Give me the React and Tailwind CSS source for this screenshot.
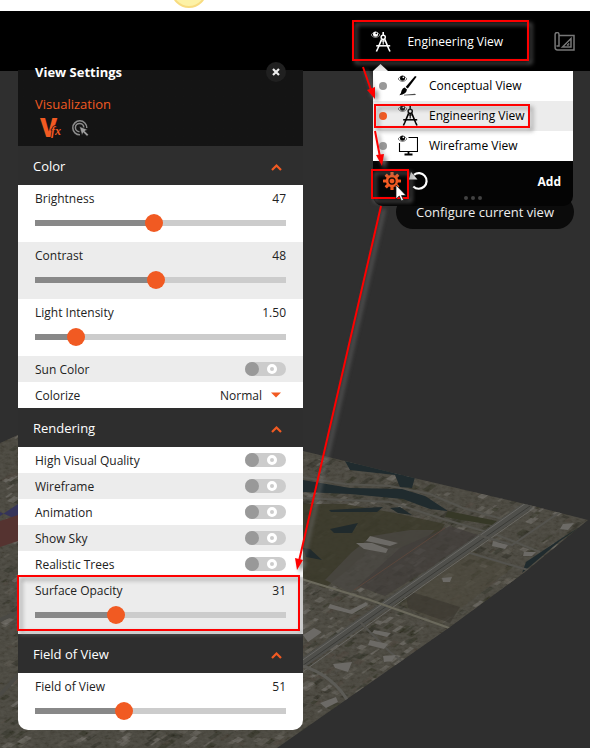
import React, { useState } from 'react';

const Eye = ({ pupil = 'white' }) => (
  <g>
    <path d="M0 4 Q4.5 -2.4 9 4 Q4.5 9 0 4 Z" fill="none" stroke="currentColor" strokeWidth="1" opacity="0.5" />
    <circle cx="4.5" cy="3.2" r="2.5" fill="currentColor" />
    <circle cx="5.3" cy="2.4" r="0.8" fill={pupil} />
  </g>
);

const CompassIcon = ({ pupil }) => (
  <svg width="20" height="22" viewBox="0 0 20 22" fill="none" stroke="currentColor" aria-hidden="true">
    <g stroke="none"><Eye pupil={pupil} /></g>
    <path d="M12.2 1v3" strokeWidth="1.6" />
    <circle cx="12.2" cy="6.3" r="2.1" strokeWidth="1.4" />
    <path d="M10.6 8.4 6.8 17.5 5.4 20.5M13.8 8.4 17.6 17.5 19 20.5" strokeWidth="1.6" />
    <path d="M5.2 14.8h14" strokeWidth="1.5" />
    <path d="M12.2 9v4.5M10.5 10h3.4" strokeWidth="1.1" />
  </svg>
);

const BrushIcon = () => (
  <svg width="20" height="22" viewBox="0 0 20 22" fill="currentColor" aria-hidden="true">
    <Eye />
    <path d="M17 1 18.6 1.8 9.8 13.6 7.6 12Z" />
    <path d="M6.6 12.6 9 14.4Q8.4 19 1.4 20.2 3.6 17.5 3.6 15.5 4.6 13 6.6 12.6Z" />
    <path d="M6 19.8 17 18.8 18 20 6 20.6Z" opacity="0.7" />
  </svg>
);

const MonitorIcon = () => (
  <svg width="20" height="22" viewBox="0 0 20 22" fill="none" stroke="currentColor" aria-hidden="true">
    <g stroke="none"><Eye /></g>
    <path d="M10.5 2.5h9v14h-18V8" strokeWidth="1.1" />
    <path d="M10.5 16.5v2.5M6.5 19.5h8" strokeWidth="1.8" />
  </svg>
);

const BlueprintIcon = () => (
  <svg width="21" height="21" viewBox="0 0 21 21" fill="none" stroke="currentColor" strokeWidth="1.5" aria-hidden="true">
    <path d="M5 3.5h15v14.5H3.5a2.4 2.4 0 0 1-2.4-2.4V2.5A1.9 1.9 0 0 1 5 2.5V14H2.5" />
    <path d="M17 6.5v8.5H8.5Z" />
    <path d="M14.8 11.3v1.9h-1.9Z" strokeWidth="1" />
  </svg>
);

const GearIcon = () => (
  <svg width="18" height="18" viewBox="-9 -9 18 18" aria-hidden="true">
    <g fill="#f15a22">
      {[0, 45, 90, 135].map((a) => (
        <rect key={a} x="-1.6" y="-9" width="3.2" height="18" rx="0.5" transform={`rotate(${a})`} />
      ))}
      <circle r="6.2" />
    </g>
    <circle r="3" fill="#f15a22" stroke="#1b0d07" strokeWidth="1.3" />
  </svg>
);

const ResetIcon = () => (
  <svg width="19" height="20" viewBox="0 0 19 20" fill="none" aria-hidden="true">
    <path d="M5 3.8A7.8 7.8 0 1 1 4.3 15.5" stroke="white" strokeWidth="2.2" />
    <path d="M0 8.5 2 1 8.5 8.5Z" fill="#ddd" />
  </svg>
);

const VfxIcon = () => (
  <svg width="24" height="23" viewBox="0 0 24 23" fill="#f15a22" className="overflow-visible" aria-hidden="true">
    <text x="0" y="20" fontSize="26" fontWeight="900" fontFamily="Roboto, sans-serif" paintOrder="stroke">
      V<tspan x="11" y="18" fontSize="12" fontWeight="700" fontStyle="italic" fontFamily="'Liberation Serif', serif" stroke="#141414" strokeWidth="1.5">fx</tspan>
    </text>
  </svg>
);

const TargetIcon = () => (
  <svg width="17" height="17" viewBox="0 0 17 17" fill="none" stroke="#8b8b8b" aria-hidden="true">
    <path d="M8 14.8A7 7 0 1 1 14.8 8" strokeWidth="1.5" />
    <path d="M7.5 11.8A4.2 4.2 0 1 1 11.8 7.5" strokeWidth="1.5" />
    <path d="M7.5 6.5 15.5 9.8 12.8 11 16.5 14.8 15 16.2 11.3 12.6 10 15.2Z" fill="#a0a0a0" stroke="#141414" strokeWidth="0.5" />
  </svg>
);

const VIEWS = [
  { name: 'Conceptual View', icon: BrushIcon },
  { name: 'Engineering View', icon: CompassIcon },
  { name: 'Wireframe View', icon: MonitorIcon },
];

// deterministic pseudo random, so the city looks the same on every load
const makeBlocks = () => {
  let seed = 7;
  const rand = () => {
    seed = (seed * 16807) % 2147483647;
    return seed / 2147483647;
  };
  const colors = ['#5a574f', '#4c4a43', '#2f3027', '#67645d', '#292922', '#484139', '#74726d', '#2b2d20'];
  return Array.from({ length: 2200 }, () => ({
    x: Math.round(rand() * 590),
    y: Math.round(430 + rand() * 318),
    w: 3 + Math.round(rand() * 7),
    h: 1 + Math.round(rand() * 2),
    fill: colors[Math.floor(rand() * colors.length)],
  }));
};

const BLOCKS = makeBlocks();

const CityMap = () => (
  <svg className="absolute inset-0 size-full" viewBox="0 0 590 748" preserveAspectRatio="xMinYMin slice" fill="none" aria-hidden="true">
    <defs>
      <clipPath id="terrain">
        <path d="M0 443 18 435 150 420 303 451 345 461 414 478 533 506 588 520 525 572 450 627 360 690 277 748H0Z" />
      </clipPath>
      <filter id="grain" x="0" y="0" width="100%" height="100%">
        <feTurbulence type="fractalNoise" baseFrequency="0.2 0.35" numOctaves="3" seed="4" />
        <feColorMatrix values="0.7 0 0 0 -0.1  0.7 0 0 0 -0.11  0.65 0 0 0 -0.12  0 0 0 0 0.5" />
      </filter>
    </defs>
    <g clipPath="url(#terrain)">
      <rect y="410" width="590" height="338" fill="#45433b" />
      {BLOCKS.map((b, i) => (
        <path key={i} d={`M${b.x} ${b.y}l${b.w} ${-b.w * 0.7}l${b.h * 2} ${b.h * 0.7}l${-b.w} ${b.w * 0.7}Z`} fill={b.fill} opacity="0.6" />
      ))}
      <rect y="410" width="590" height="338" filter="url(#grain)" opacity="0.25" />
      <path d="M303 504 345 504 395 513 445 524 436 538 400 548 370 548 350 568 325 588 290 573Z" fill="#3b3a2a" opacity="0.85" />
      <path d="M352 552 372 536 410 530 435 530 400 564 350 592 325 580Z" fill="#4a4742" opacity="0.8" />
      <path d="M400 548 450 526 478 535 430 568 385 596 358 586Z" fill="#423e3b" opacity="0.75" />
      <path d="M470 550 512 568 440 625 400 604Z" fill="#4c483d" opacity="0.55" />
      <path d="M405 590 460 607 450 623 408 608Z" fill="#38362f" opacity="0.6" />
      <path d="M448 511 497 521 492 525 445 517Z" fill="#363827" />
      <path d="M300 477 345 484 390 486 430 494 463 508 502 519M303 498 390 502 440 518 500 536 540 552" stroke="#55544e" strokeWidth="2" />
      <path d="M303 480 350 488 402 489 425 496 448 511 430 509 403 499 350 494 303 492Z" fill="#202b2e" />
      <path d="M345 461 415 477 412 488 400 487 395 475 350 470Z" fill="#202b2e" />
      <path d="M329 510 383 507 377 512 331 512ZM330 529 358 523 352 533 334 533ZM390 508 400 507 412 515 398 513ZM303 548 310 549 322 560 306 557Z" fill="#202a2c" />
      <path d="M590 520 560 541 522 573 526 562 562 538 588 522Z" fill="#202b2e" />
      <path d="M0 620 60 595M0 695 50 640" stroke="#4b4a45" strokeWidth="4" />
      <path d="M290 672 420 581 530 504" stroke="#4f4f4b" strokeWidth="9" />
      <path d="M290 669 418 579 526 503M294 678 424 585 534 508" stroke="#696864" strokeWidth="1" />
      <path d="M292 673 421 582 530 506" stroke="#3b3b37" strokeWidth="1" />
      <path d="M295 577 370 600 452 629" stroke="#6b695c" strokeWidth="2" />
      <path d="M303 666Q334 676 349 703" stroke="#5c5b56" strokeWidth="3" />
      <path d="M354 590 445 528" stroke="#5a463c" strokeWidth="1" />
      <path d="M470 553 535 572M360 622 390 652 403 662M478 535 512 545 560 512" stroke="#54534e" strokeWidth="2" />
      <path d="M370 536 398 543 390 546 366 541ZM356 543 372 543 388 549 386 553 364 549ZM330 604 350 610 366 602 368 605 352 614 328 608ZM303 635 314 628 322 632 308 642ZM374 630 391 633 387 637 372 633ZM370 640 388 644 384 649 368 645ZM383 656 396 655 392 661 384 662ZM493 541 508 545 505 549 492 546ZM524 552 536 552 532 556 523 556ZM563 524 574 523 568 530 560 529ZM442 578 452 577 450 582 443 582ZM333 664 352 662 348 672 335 668ZM320 703 336 697 338 702 326 708Z" fill="#6c6a66" />
      <path d="M0 516 18 504V520L0 512Z" fill="#35345a" />
      <path d="M0 521 18 515V541L0 547Z" fill="#553330" />
    </g>
  </svg>
);

const Section = ({ title, children }) => {
  const [open, setOpen] = useState(true);
  return (
    <section>
      <h3>
        <button onClick={() => setOpen(!open)} aria-expanded={open} className="flex h-[39px] w-full items-center justify-between bg-[#2e2e2e] pt-0.5 pr-5 pl-[15px] text-[13px] text-white">
          {title}
          <svg width="13" height="8" viewBox="0 0 13 8" fill="none" className={open ? '' : 'rotate-180'} aria-hidden="true">
            <path d="M2 7 6.5 2.5 11 7" stroke="#f15a22" strokeWidth="2.2" />
          </svg>
        </button>
      </h3>
      {open && children}
    </section>
  );
};

const SliderRow = ({ label, initial, min = 0, max = 100, step = 1, digits = 0, shaded }) => {
  const [value, setValue] = useState(initial);
  const percent = ((value - min) / (max - min)) * 100;
  return (
    <label className={`block h-[57px] px-[17px] pt-1 ${shaded ? 'bg-[#ececec]' : 'bg-white'}`}>
      <span className="flex h-5 items-center justify-between">
        <span>{label}</span>
        <span>{value.toFixed(digits)}</span>
      </span>
      <input
        type="range"
        min={min}
        max={max}
        step={step}
        value={value}
        onChange={(e) => setValue(Number(e.target.value))}
        className="mt-[11px] block h-1.5 w-full cursor-pointer appearance-none [&::-webkit-slider-thumb]:size-[18px] [&::-webkit-slider-thumb]:appearance-none [&::-webkit-slider-thumb]:rounded-full [&::-webkit-slider-thumb]:bg-[#f15a22]"
        style={{ background: `linear-gradient(to right, #888 ${percent}%, #ccc ${percent}%)` }}
      />
    </label>
  );
};

const ToggleRow = ({ label, shaded }) => {
  const [on, setOn] = useState(false);
  return (
    <label className={`relative flex h-[26px] cursor-pointer items-center justify-between px-[17px] ${shaded ? 'bg-[#ececec]' : 'bg-white'}`}>
      <span className="pt-0.5">{label}</span>
      <input type="checkbox" checked={on} onChange={() => setOn(!on)} className="sr-only" />
      <span className={`flex h-3.5 w-[41px] items-center justify-between rounded-full bg-[#ccc] ${on ? 'flex-row-reverse pl-[9px]' : 'pr-[9px]'}`}>
        <span className={`size-3.5 rounded-full ${on ? 'bg-[#f15a22]' : 'bg-[#999]'}`} />
        <span className="size-2.5 rounded-full border-3 border-white" />
      </span>
    </label>
  );
};

const ViewSettings = () => (
  <aside className="relative -mt-5 w-[285px] text-[12px] text-[#222]">
    <div className="bg-linear-to-b from-transparent from-20% to-[#141414] to-20% pb-1.5">
      <header className="flex h-[42px] items-center justify-between px-[17px]">
        <h2 className="pt-0.5 text-[13px] font-bold text-white">View Settings</h2>
        <button aria-label="Close" className="flex size-5 items-center justify-center rounded-full bg-[#202020]">
          <svg width="8" height="8" viewBox="0 0 8 8" aria-hidden="true">
            <path d="M1 1 7 7M7 1 1 7" stroke="#eee" strokeWidth="2.2" />
          </svg>
        </button>
      </header>
      <p className="flex h-6 items-center px-[17px] text-[13px] text-[#f15a22]">Visualization</p>
      <div className="flex h-[23px] items-center gap-2 pl-[22px]">
        <button aria-label="Visual effects"><VfxIcon /></button>
        <button aria-label="Selection"><TargetIcon /></button>
      </div>
    </div>
    <Section title="Color">
      <SliderRow label="Brightness" initial={47} />
      <SliderRow label="Contrast" initial={48} shaded />
      <SliderRow label="Light Intensity" initial={1.5} max={11} step={0.01} digits={2} />
      <ToggleRow label="Sun Color" shaded />
      <div className="flex h-[26px] items-center justify-between bg-white pr-[22px] pl-[17px]">
        <label htmlFor="colorize" className="pt-0.5">Colorize</label>
        <span className="flex items-center gap-[9px]">
          <select id="colorize" className="field-sizing-content cursor-pointer appearance-none bg-transparent pt-0.5">
            <option>Normal</option>
            <option>Grayscale</option>
            <option>Sepia</option>
          </select>
          <svg width="10" height="6" viewBox="0 0 10 6" aria-hidden="true"><path d="M0 0.5H10L5 5.5Z" fill="#f15a22" /></svg>
        </span>
      </div>
    </Section>
    <Section title="Rendering">
      <ToggleRow label="High Visual Quality" />
      <ToggleRow label="Wireframe" shaded />
      <ToggleRow label="Animation" />
      <ToggleRow label="Show Sky" shaded />
      <ToggleRow label="Realistic Trees" />
      <SliderRow label="Surface Opacity" initial={31} shaded />
    </Section>
    <div className="overflow-hidden rounded-b-[10px]">
      <Section title="Field of View">
        <SliderRow label="Field of View" initial={51} min={15} max={120} />
      </Section>
    </div>
  </aside>
);

const ViewMenu = ({ current, onSelect }) => (
  <div className="absolute top-full right-[17px] w-[200px] text-[12px]">
    <span role="tooltip" className="absolute top-[124px] -right-px flex h-[34px] items-center rounded-full bg-[#0b0b0b] px-5 pt-0.5 text-[13px] whitespace-nowrap text-[#eee]">
      Configure current view
    </span>
    <svg className="absolute -top-[7px] left-0" width="15" height="7" viewBox="0 0 15 7" aria-hidden="true">
      <path d="M0 7 7.5 0 15 7Z" fill="#e9e9e9" />
    </svg>
    <ul className="relative">
      {VIEWS.map(({ name, icon: Icon }) => (
        <li key={name}>
          <button onClick={() => onSelect(name)} className={`flex h-[30px] w-full items-center gap-[11px] pl-1.5 text-black ${name === current ? 'bg-[#ececec]' : 'bg-white'}`}>
            <span className={`size-2 rounded-full ${name === current ? 'bg-[#f15a22]' : 'bg-[#999]'}`} />
            <Icon />
            {name}
          </button>
        </li>
      ))}
    </ul>
    <div className="relative h-[45px] rounded-b-[10px] bg-[#040404]">
      <div className="flex h-10 items-center gap-2 pr-3 pl-2.5">
        <button aria-label="Configure current view"><GearIcon /></button>
        <button aria-label="Reset view"><ResetIcon /></button>
        <button className="ml-auto pt-0.5 font-bold text-white">Add</button>
      </div>
      <div className="-mt-[5px] flex justify-center gap-[3px]">
        <span className="size-1 rounded-full bg-[#424242]" />
        <span className="size-1 rounded-full bg-[#424242]" />
        <span className="size-1 rounded-full bg-[#424242]" />
      </div>
    </div>
  </div>
);

// callout frames and arrows laid over the interface
const Callouts = () => (
  <svg className="pointer-events-none absolute top-0 right-0 h-[748px] w-[590px] drop-shadow-[3px_3px_2px_rgba(125,125,125,0.85)]" viewBox="0 0 590 748" fill="none" stroke="#fe0000" strokeWidth="2" aria-hidden="true">
    <rect x="353" y="21" width="175" height="39" />
    <rect x="375" y="105" width="154" height="22" />
    <rect x="372" y="170" width="36" height="28" />
    <rect x="18" y="576" width="281" height="54" />
    <path d="M363 67 371 90M375 131 380 157M381 206 299 561" />
    <g fill="#fe0000" stroke="none">
      <path d="M375 99 367 90 375 87Z" />
      <path d="M382 166 376 155 384 154Z" />
      <path d="M297 570 295 558 303 560Z" />
    </g>
  </svg>
);

const Cursor = () => (
  <svg className="pointer-events-none absolute top-[184px] right-[183px]" width="12" height="18" viewBox="0 0 12 18" aria-hidden="true">
    <path d="M1 1V15L4.3 12 6.5 17 8.5 16 6.5 11.5H11Z" fill="white" stroke="#111" strokeWidth="0.7" />
  </svg>
);

const App = () => {
  const [view, setView] = useState('Engineering View');

  return (
    <div className="relative flex min-h-screen flex-col overflow-hidden bg-[#2f2f2f] font-['Open_Sans','Noto_Sans',sans-serif]">
      <CityMap />
      <div className="relative h-[11px] overflow-hidden bg-white">
        <span className="absolute -top-7 left-[171px] size-9 rounded-full border-2 border-[#f8dc80] bg-[#fdf2a6]" />
      </div>
      <header className="relative z-10 flex h-[60px] items-center justify-end bg-black pr-[15px]">
        <button className="flex items-center gap-4 pt-0.5 text-[12px] text-white">
          <CompassIcon pupil="black" />
          {view}
        </button>
        <button aria-label="Blueprints" className="ml-[51px] pt-0.5 text-[#777]"><BlueprintIcon /></button>
        <ViewMenu current={view} onSelect={setView} />
      </header>
      <main className="relative z-20 w-fit pb-[18px] pl-[18px]">
        <ViewSettings />
      </main>
      <div className="pointer-events-none absolute inset-0 z-30">
        <Callouts />
        <Cursor />
      </div>
    </div>
  );
};

export default App;
